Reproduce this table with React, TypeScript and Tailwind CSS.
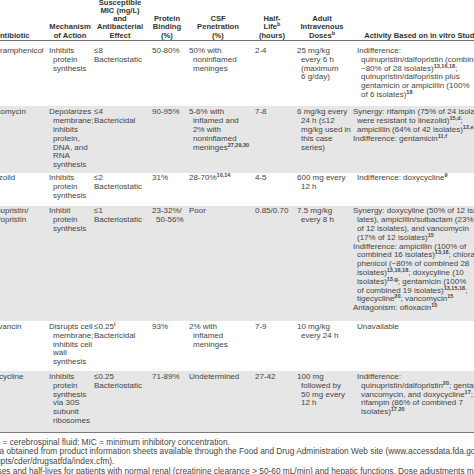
import type { ReactNode } from 'react';

// superscript reference marks
function S({ children }: { children: ReactNode }) {
  return <sup className="relative top-[-3px] text-[5.5px] font-bold leading-[0px]">{children}</sup>;
}

type Paras = ReactNode[][];

interface Row {
  gray: boolean;
  height: string;
  pad: string;
  shift?: boolean;
  cells: Paras[];
}

// height = row height minus top padding
const rows: Row[] = [
  {
    gray: false,
    height: 'h-[59px]',
    pad: 'pt-[6px]',
    cells: [
      [['Chloramphenicol']],
      [['Inhibits', 'protein', 'synthesis']],
      [['≤8'], ['Bacteriostatic']],
      [['50-80%']],
      [['50% with', 'noninflamed', 'meninges']],
      [['2-4']],
      [['25 mg/kg', 'every 6 h', '(maximum', '6 g/day)']],
      [
        [
          'Indifference:',
          'quinupristin/dalfopristin (combined',
          <>~80% of 28 isolates)<S>13,16,18</S>;</>,
          'quinupristin/dalfopristin plus',
          'gentamicin or ampicillin (100%',
          <>of 6 isolates)<S>18</S></>,
        ],
      ],
    ],
  },
  {
    gray: true,
    height: 'h-[64.5px]',
    pad: 'pt-[2.5px]',
    shift: true,
    cells: [
      [['Daptomycin']],
      [['Depolarizes', 'membrane;', 'inhibits', 'protein,', 'DNA, and', 'RNA', 'synthesis']],
      [['≤4'], ['Bactericidal']],
      [['90-95%']],
      [['5-6% with', 'inflamed and', '2% with', 'noninflamed', <>meninges<S>27,29,30</S></>]],
      [['7-8']],
      [['6 mg/kg every', '24 h (≤12', 'mg/kg used in', 'this case', 'series)']],
      [
        [
          'Synergy: rifampin (75% of 24 isolates',
          <>were resistant to linezolid)<S>15,d</S>;</>,
          <>ampicillin (64% of 42 isolates)<S>12,e</S></>,
        ],
        [<>Indifference: gentamicin<S>11,f</S></>],
      ],
    ],
  },
  {
    gray: false,
    height: 'h-[31.5px]',
    pad: 'pt-[1.5px]',
    cells: [
      [['Linezolid']],
      [['Inhibits', 'protein', 'synthesis']],
      [['≤2'], ['Bacteriostatic']],
      [['31%']],
      [[<>28-70%<S>10,14</S></>]],
      [['4-5']],
      [['600 mg every', '12 h']],
      [[<>Indifference: doxycycline<S>9</S></>]],
    ],
  },
  {
    gray: true,
    height: 'h-[113.5px]',
    pad: 'pt-[1.5px]',
    shift: true,
    cells: [
      [['Quinupristin/', 'dalfopristin']],
      [['Inhibit', 'protein', 'synthesis']],
      [['≤1'], ['Bacteriostatic']],
      [['23-32%/', '50-56%']],
      [['Poor']],
      [['0.85/0.70']],
      [['7.5 mg/kg', 'every 8 h']],
      [
        [
          'Synergy: doxycyline (50% of 12 iso-',
          'lates), ampicillin/sulbactam (23%',
          'of 12 isolates), and vancomycin',
          <>(17% of 12 isolates)<S>15</S></>,
        ],
        [
          'Indifference: ampicillin (100% of',
          <>combined 16 isolates)<S>13,18</S>; chloram-</>,
          'phenicol (~80% of combined 28',
          <>isolates)<S>13,16,18</S>; doxycyline (10</>,
          <>isolates)<S>13,g</S>; gentamicin (100%</>,
          <>of combined 19 isolates)<S>13,15,18</S>;</>,
          <>tigecycline<S>20</S>; vancomycin<S>15</S></>,
        ],
        [<>Antagonism: ofloxacin<S>15</S></>],
      ],
    ],
  },
  {
    gray: false,
    height: 'h-[48px]',
    pad: 'pt-[2px]',
    cells: [
      [['Telavancin']],
      [['Disrupts cell', 'membrane;', 'inhibits cell', 'wall', 'synthesis']],
      [[<>≤0.25<S>i</S></>], ['Bactericidal']],
      [['93%']],
      [['2% with', 'inflamed', 'meninges']],
      [['7-9']],
      [['10 mg/kg', 'every 24 h']],
      [['Unavailable']],
    ],
  },
  {
    gray: true,
    height: 'h-[59px]',
    pad: 'pt-[2px]',
    cells: [
      [['Tigecycline']],
      [['Inhibits', 'protein', 'synthesis', 'via 30S', 'subunit', 'ribosomes']],
      [['≤0.25'], ['Bacteriostatic']],
      [['71-89%']],
      [['Undetermined']],
      [['27-42']],
      [['100 mg', 'followed by', '50 mg every', '12 h']],
      [
        [
          'Indifference:',
          <>quinupristin/dalfopristin<S>20</S>; gentamicin,</>,
          <>vancomycin, and doxycycline<S>17</S>;</>,
          'rifampin (86% of combined 7',
          <>isolates)<S>17,20</S></>,
        ],
      ],
    ],
  },
];

const headers: { width: string; lines: ReactNode[] }[] = [
  { width: 'w-[56.8px]', lines: ['Antibiotic'] },
  { width: 'w-[42px]', lines: ['Mechanism', 'of Action'] },
  { width: 'w-[52px]', lines: ['Susceptible', 'MIC (mg/L)', 'and', 'Antibacterial', 'Effect'] },
  { width: 'w-[30px]', lines: ['Protein', 'Binding', '(%)'] },
  { width: 'w-[58px]', lines: ['CSF', 'Penetration', '(%)'] },
  { width: 'w-[34px]', lines: ['Half-', <>Life<S>b</S></>, '(hours)'] },
  { width: 'w-[50px]', lines: ['Adult', 'Intravenous', <>Doses<S>b</S></>] },
  { width: 'w-[135px]', lines: ['Activity Based on in vitro Studies'] },
];

function Lines({ paras }: { paras: Paras }) {
  return (
    <>
      {paras.map((p, i) => (
        <div key={i}>
          {p.map((l, j) => (
            <div
              key={j}
              className={
                j > 0
                  ? 'h-[8.8px] overflow-visible whitespace-nowrap pl-[4px] leading-[8.8px]'
                  : 'h-[8.8px] overflow-visible whitespace-nowrap leading-[8.8px]'
              }
            >
              {l}
            </div>
          ))}
        </div>
      ))}
    </>
  );
}

export default function App() {
  return (
    <div className="h-[474px] w-[474px] overflow-hidden bg-white font-['Liberation_Sans',Arial,sans-serif] text-[#454545]">
      <div className="ml-[-16.4px] mt-[-1.5px]">
        <table className="w-[508.4px] table-fixed border-collapse">
          <colgroup>
            <col className="w-[65.4px]" />
            <col className="w-[45px]" />
            <col className="w-[58px]" />
            <col className="w-[37px]" />
            <col className="w-[66px]" />
            <col className="w-[42px]" />
            <col className="w-[60px]" />
            <col className="w-[135px]" />
          </colgroup>
          <thead>
            <tr className="border-b border-[#707070]">
              {headers.map((h, i) => (
                <th key={i} className="h-[41.5px] p-0 align-bottom font-bold">
                  <div className={`${h.width} whitespace-nowrap text-center text-[7.6px] leading-[8.3px] text-[#333333]`}>
                    {h.lines.map((l, j) => (
                      <div key={j} className="h-[8.3px]">
                        {l}
                      </div>
                    ))}
                  </div>
                </th>
              ))}
            </tr>
          </thead>
          <tbody className="text-[8px]">
            {rows.map((r, i) => (
              <tr
                key={i}
                className={`${r.gray ? 'bg-[#e6e6e6]' : 'bg-white'} ${i === rows.length - 1 ? 'border-b border-[#7a7a7a]' : ''}`}
              >
                {r.cells.map((c, j) => (
                  <td key={j} className={`${r.pad} p-0 align-top`}>
                    <div className={`${r.height} ${j === 7 && r.shift ? 'ml-[-4px]' : ''}`}>
                      <Lines paras={c} />
                    </div>
                  </td>
                ))}
              </tr>
            ))}
          </tbody>
        </table>
        <div className="mt-[4.8px] text-[8.3px] leading-[9.7px]">
          <div className="h-[9.7px] whitespace-nowrap">CSF = cerebrospinal fluid; MIC = minimum inhibitory concentration.</div>
          <div className="h-[9.7px] whitespace-nowrap">
            <S>a</S>Data obtained from product information sheets available through the Food and Drug Administration Web site (www.accessdata.fda.gov/
          </div>
          <div className="h-[9.7px] whitespace-nowrap pl-[4px]">scripts/cder/drugsatfda/index.cfm).</div>
          <div className="h-[9.7px] whitespace-nowrap">
            <S>b</S>Doses and half-lives for patients with normal renal (creatinine clearance &gt; 50-60 mL/min) and hepatic functions. Dose adjustments may be needed.
          </div>
        </div>
      </div>
    </div>
  );
}
